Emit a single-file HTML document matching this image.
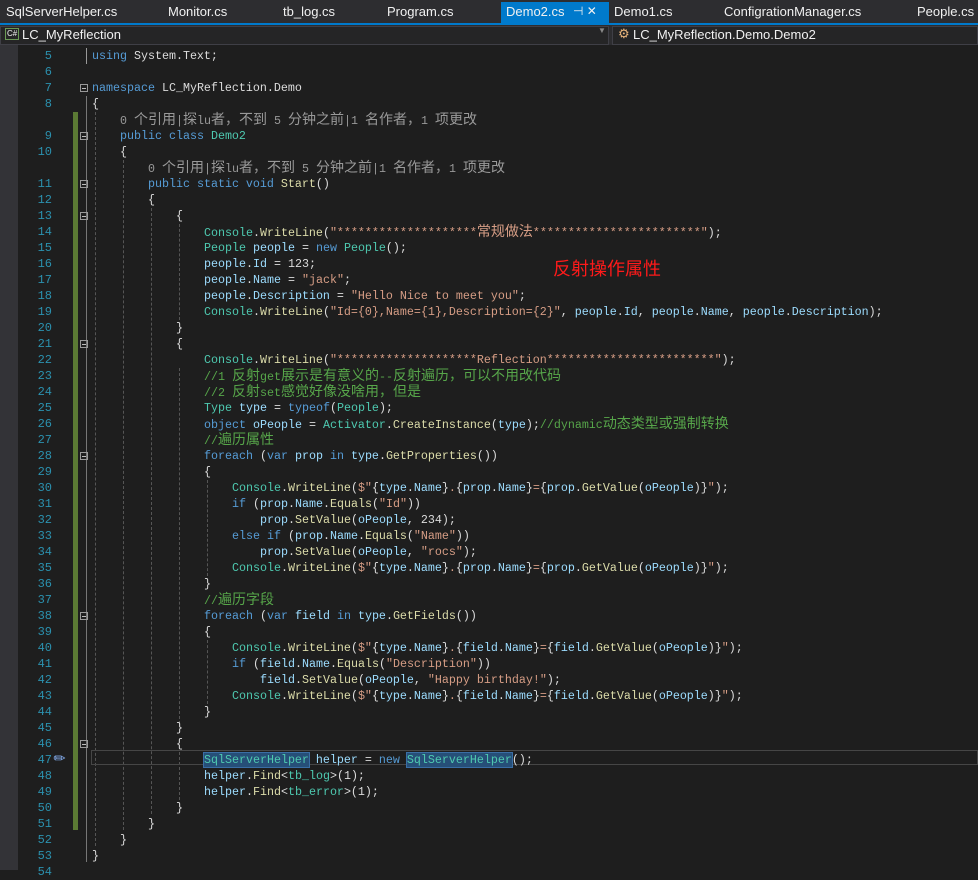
<!DOCTYPE html>
<html><head><meta charset="utf-8"><style>
body{margin:0;width:978px;height:870px;background:#1e1e1e;overflow:hidden;position:relative;font-family:"Liberation Sans","Noto Sans CJK SC",sans-serif}
.tabs{position:absolute;left:0;top:0;width:978px;height:23px;background:#2d2d30;color:#f1f1f1;font-size:13px}
.tab{position:absolute;top:4px}
.act{position:absolute;left:501px;top:2px;width:108px;height:21px;background:#007acc}
.blue{position:absolute;left:0;top:23px;width:978px;height:2px;background:#007acc}
.nav{position:absolute;left:0;top:25px;width:978px;height:20px;background:#2d2d30;color:#f1f1f1;font-size:13px}
.box{position:absolute;top:1px;height:17px;border:1px solid #3f3f46;background:#252526}
.marg{position:absolute;left:0;top:45px;width:18px;height:825px;background:#333337}
.code{position:absolute;left:0;top:0;font-family:"Liberation Mono","Noto Sans CJK SC",monospace;font-size:11.67px;white-space:pre}
.r{position:absolute;height:16px;line-height:16px}
.n{position:absolute;width:52px;text-align:right;color:#2b91af;font-family:"Liberation Mono",monospace;font-size:12px;height:16px;line-height:16px}
.c{font-size:14px;font-family:"Noto Sans CJK SC",sans-serif;line-height:14px}
.k{color:#569cd6}.t{color:#4ec9b0}.s{color:#d69d85}.g{color:#57a64a}.m{color:#dcdcaa}.v{color:#9cdcfe}.p{color:#dcdcdc}.l{color:#999}
.chg{position:absolute;left:73px;width:5px;background:#5b7a34}
.fold{position:absolute;left:80px;width:8px;height:8px;border:1px solid #999;box-sizing:border-box}
.fold:after{content:"";position:absolute;left:1px;top:3px;width:4px;height:1px;background:#bbb}
.gd{position:absolute;border-left:1px dashed #555;width:0}
</style></head><body>
<div class="tabs">
<div class="act"></div>
<span class="tab" style="left:6px">SqlServerHelper.cs</span>
<span class="tab" style="left:168px">Monitor.cs</span>
<span class="tab" style="left:283px">tb_log.cs</span>
<span class="tab" style="left:387px">Program.cs</span>
<span class="tab" style="left:506px">Demo2.cs</span>
<span class="tab" style="left:573px;font-size:12px">⊣ ✕</span>
<span class="tab" style="left:614px">Demo1.cs</span>
<span class="tab" style="left:724px">ConfigrationManager.cs</span>
<span class="tab" style="left:917px">People.cs</span>
</div>
<div class="blue"></div>
<div class="nav">
<div class="box" style="left:0;width:607px"></div>
<div class="box" style="left:612px;width:364px"></div>
<span style="position:absolute;left:5px;top:3px;border:1px solid #6a9955;font-size:8px;line-height:10px;padding:0 1px">C#</span>
<span style="position:absolute;left:22px;top:2px">LC_MyReflection</span>
<span style="position:absolute;left:598px;top:1px;font-size:8px;color:#888">▼</span>
<span style="position:absolute;left:618px;top:1px;color:#e8b47a">⚙</span>
<span style="position:absolute;left:633px;top:2px">LC_MyReflection.Demo.Demo2</span>
</div>
<div class="marg"></div>
<div class="chg" style="top:112px;height:718px"></div>
<div class="gd" style="left:95px;top:112px;height:734px"></div>
<div class="gd" style="left:123px;top:160px;height:670px"></div>
<div class="gd" style="left:151px;top:208px;height:606px"></div>
<div class="gd" style="left:179px;top:224px;height:96px"></div>
<div class="gd" style="left:179px;top:368px;height:356px"></div>
<div class="gd" style="left:179px;top:752px;height:48px"></div>
<div class="gd" style="left:207px;top:480px;height:96px"></div>
<div class="gd" style="left:207px;top:640px;height:64px"></div>
<div style="position:absolute;left:86px;top:48px;width:0;height:16px;border-left:1px solid #999"></div>
<div style="position:absolute;left:86px;top:96px;width:0;height:766px;border-left:1px solid #777"></div>
<div style="position:absolute;left:91px;top:750px;width:887px;height:15px;border:1px solid #464646;box-sizing:border-box"></div>
<div class="fold" style="top:84px"></div><div class="fold" style="top:132px"></div><div class="fold" style="top:180px"></div><div class="fold" style="top:212px"></div><div class="fold" style="top:340px"></div><div class="fold" style="top:452px"></div><div class="fold" style="top:612px"></div><div class="fold" style="top:740px"></div>
<div style="position:absolute;left:54px;top:750px;color:#8ab4f8;font-size:14px;transform:rotate(-45deg)">✎</div>
<div class="code" id="c">
<div class="n" style="top:48px">5</div><div class="r" style="top:48px;left:92px"><span class="k">using</span><span class="p"> System.Text;</span></div>
<div class="n" style="top:64px">6</div>
<div class="n" style="top:80px">7</div><div class="r" style="top:80px;left:92px"><span class="k">namespace</span><span class="p"> LC_MyReflection.Demo</span></div>
<div class="n" style="top:96px">8</div><div class="r p" style="top:96px;left:92px">{</div>
<div class="r l" style="top:112px;left:120px">0 <span class="c">个引用</span>|<span class="c">探</span>lu<span class="c">者，不到</span> 5 <span class="c">分钟之前</span>|1 <span class="c">名作者，</span>1 <span class="c">项更改</span></div>
<div class="n" style="top:128px">9</div><div class="r" style="top:128px;left:120px"><span class="k">public class</span><span class="t"> Demo2</span></div>
<div class="n" style="top:144px">10</div><div class="r p" style="top:144px;left:120px">{</div>
<div class="r l" style="top:160px;left:148px">0 <span class="c">个引用</span>|<span class="c">探</span>lu<span class="c">者，不到</span> 5 <span class="c">分钟之前</span>|1 <span class="c">名作者，</span>1 <span class="c">项更改</span></div>
<div class="n" style="top:176px">11</div><div class="r" style="top:176px;left:148px"><span class="k">public static void</span><span class="m"> Start</span><span class="p">()</span></div>
<div class="n" style="top:192px">12</div><div class="r p" style="top:192px;left:148px">{</div>
<div class="n" style="top:208px">13</div><div class="r p" style="top:208px;left:176px">{</div>
<div class="n" style="top:224px">14</div><div class="r" style="top:224px;left:204px"><span class="t">Console</span><span class="p">.</span><span class="m">WriteLine</span><span class="p">(</span><span class="s">"********************<span class="c">常规做法</span>************************"</span><span class="p">);</span></div>
<div class="n" style="top:240px">15</div><div class="r" style="top:240px;left:204px"><span class="t">People</span><span class="v"> people</span><span class="p"> = </span><span class="k">new</span><span class="t"> People</span><span class="p">();</span></div>
<div class="n" style="top:256px">16</div><div class="r" style="top:256px;left:204px"><span class="v">people</span><span class="p">.</span><span class="v">Id</span><span class="p"> = 123;</span></div>
<div class="n" style="top:272px">17</div><div class="r" style="top:272px;left:204px"><span class="v">people</span><span class="p">.</span><span class="v">Name</span><span class="p"> = </span><span class="s">"jack"</span><span class="p">;</span></div>
<div class="n" style="top:288px">18</div><div class="r" style="top:288px;left:204px"><span class="v">people</span><span class="p">.</span><span class="v">Description</span><span class="p"> = </span><span class="s">"Hello Nice to meet you"</span><span class="p">;</span></div>
<div class="n" style="top:304px">19</div><div class="r" style="top:304px;left:204px"><span class="t">Console</span><span class="p">.</span><span class="m">WriteLine</span><span class="p">(</span><span class="s">"Id={0},Name={1},Description={2}"</span><span class="p">, </span><span class="v">people</span><span class="p">.</span><span class="v">Id</span><span class="p">, </span><span class="v">people</span><span class="p">.</span><span class="v">Name</span><span class="p">, </span><span class="v">people</span><span class="p">.</span><span class="v">Description</span><span class="p">);</span></div>
<div class="n" style="top:320px">20</div><div class="r p" style="top:320px;left:176px">}</div>
<div class="n" style="top:336px">21</div><div class="r p" style="top:336px;left:176px">{</div>
<div class="n" style="top:352px">22</div><div class="r" style="top:352px;left:204px"><span class="t">Console</span><span class="p">.</span><span class="m">WriteLine</span><span class="p">(</span><span class="s">"********************Reflection************************"</span><span class="p">);</span></div>
<div class="n" style="top:368px">23</div><div class="r g" style="top:368px;left:204px">//1 <span class="c">反射</span>get<span class="c">展示是有意义的</span>--<span class="c">反射遍历，可以不用改代码</span></div>
<div class="n" style="top:384px">24</div><div class="r g" style="top:384px;left:204px">//2 <span class="c">反射</span>set<span class="c">感觉好像没啥用，但是</span></div>
<div class="n" style="top:400px">25</div><div class="r" style="top:400px;left:204px"><span class="t">Type</span><span class="v"> type</span><span class="p"> = </span><span class="k">typeof</span><span class="p">(</span><span class="t">People</span><span class="p">);</span></div>
<div class="n" style="top:416px">26</div><div class="r" style="top:416px;left:204px"><span class="k">object</span><span class="v"> oPeople</span><span class="p"> = </span><span class="t">Activator</span><span class="p">.</span><span class="m">CreateInstance</span><span class="p">(</span><span class="v">type</span><span class="p">);</span><span class="g">//dynamic<span class="c">动态类型或强制转换</span></span></div>
<div class="n" style="top:432px">27</div><div class="r g" style="top:432px;left:204px">//<span class="c">遍历属性</span></div>
<div class="n" style="top:448px">28</div><div class="r" style="top:448px;left:204px"><span class="k">foreach</span><span class="p"> (</span><span class="k">var</span><span class="v"> prop</span><span class="k"> in</span><span class="v"> type</span><span class="p">.</span><span class="m">GetProperties</span><span class="p">())</span></div>
<div class="n" style="top:464px">29</div><div class="r p" style="top:464px;left:204px">{</div>
<div class="n" style="top:480px">30</div><div class="r" style="top:480px;left:232px"><span class="t">Console</span><span class="p">.</span><span class="m">WriteLine</span><span class="p">(</span><span class="s">$"</span><span class="p">{</span><span class="v">type</span><span class="p">.</span><span class="v">Name</span><span class="p">}</span><span class="s">.</span><span class="p">{</span><span class="v">prop</span><span class="p">.</span><span class="v">Name</span><span class="p">}</span><span class="s">=</span><span class="p">{</span><span class="v">prop</span><span class="p">.</span><span class="m">GetValue</span><span class="p">(</span><span class="v">oPeople</span><span class="p">)}</span><span class="s">"</span><span class="p">);</span></div>
<div class="n" style="top:496px">31</div><div class="r" style="top:496px;left:232px"><span class="k">if</span><span class="p"> (</span><span class="v">prop</span><span class="p">.</span><span class="v">Name</span><span class="p">.</span><span class="m">Equals</span><span class="p">(</span><span class="s">"Id"</span><span class="p">))</span></div>
<div class="n" style="top:512px">32</div><div class="r" style="top:512px;left:260px"><span class="v">prop</span><span class="p">.</span><span class="m">SetValue</span><span class="p">(</span><span class="v">oPeople</span><span class="p">, 234);</span></div>
<div class="n" style="top:528px">33</div><div class="r" style="top:528px;left:232px"><span class="k">else if</span><span class="p"> (</span><span class="v">prop</span><span class="p">.</span><span class="v">Name</span><span class="p">.</span><span class="m">Equals</span><span class="p">(</span><span class="s">"Name"</span><span class="p">))</span></div>
<div class="n" style="top:544px">34</div><div class="r" style="top:544px;left:260px"><span class="v">prop</span><span class="p">.</span><span class="m">SetValue</span><span class="p">(</span><span class="v">oPeople</span><span class="p">, </span><span class="s">"rocs"</span><span class="p">);</span></div>
<div class="n" style="top:560px">35</div><div class="r" style="top:560px;left:232px"><span class="t">Console</span><span class="p">.</span><span class="m">WriteLine</span><span class="p">(</span><span class="s">$"</span><span class="p">{</span><span class="v">type</span><span class="p">.</span><span class="v">Name</span><span class="p">}</span><span class="s">.</span><span class="p">{</span><span class="v">prop</span><span class="p">.</span><span class="v">Name</span><span class="p">}</span><span class="s">=</span><span class="p">{</span><span class="v">prop</span><span class="p">.</span><span class="m">GetValue</span><span class="p">(</span><span class="v">oPeople</span><span class="p">)}</span><span class="s">"</span><span class="p">);</span></div>
<div class="n" style="top:576px">36</div><div class="r p" style="top:576px;left:204px">}</div>
<div class="n" style="top:592px">37</div><div class="r g" style="top:592px;left:204px">//<span class="c">遍历字段</span></div>
<div class="n" style="top:608px">38</div><div class="r" style="top:608px;left:204px"><span class="k">foreach</span><span class="p"> (</span><span class="k">var</span><span class="v"> field</span><span class="k"> in</span><span class="v"> type</span><span class="p">.</span><span class="m">GetFields</span><span class="p">())</span></div>
<div class="n" style="top:624px">39</div><div class="r p" style="top:624px;left:204px">{</div>
<div class="n" style="top:640px">40</div><div class="r" style="top:640px;left:232px"><span class="t">Console</span><span class="p">.</span><span class="m">WriteLine</span><span class="p">(</span><span class="s">$"</span><span class="p">{</span><span class="v">type</span><span class="p">.</span><span class="v">Name</span><span class="p">}</span><span class="s">.</span><span class="p">{</span><span class="v">field</span><span class="p">.</span><span class="v">Name</span><span class="p">}</span><span class="s">=</span><span class="p">{</span><span class="v">field</span><span class="p">.</span><span class="m">GetValue</span><span class="p">(</span><span class="v">oPeople</span><span class="p">)}</span><span class="s">"</span><span class="p">);</span></div>
<div class="n" style="top:656px">41</div><div class="r" style="top:656px;left:232px"><span class="k">if</span><span class="p"> (</span><span class="v">field</span><span class="p">.</span><span class="v">Name</span><span class="p">.</span><span class="m">Equals</span><span class="p">(</span><span class="s">"Description"</span><span class="p">))</span></div>
<div class="n" style="top:672px">42</div><div class="r" style="top:672px;left:260px"><span class="v">field</span><span class="p">.</span><span class="m">SetValue</span><span class="p">(</span><span class="v">oPeople</span><span class="p">, </span><span class="s">"Happy birthday!"</span><span class="p">);</span></div>
<div class="n" style="top:688px">43</div><div class="r" style="top:688px;left:232px"><span class="t">Console</span><span class="p">.</span><span class="m">WriteLine</span><span class="p">(</span><span class="s">$"</span><span class="p">{</span><span class="v">type</span><span class="p">.</span><span class="v">Name</span><span class="p">}</span><span class="s">.</span><span class="p">{</span><span class="v">field</span><span class="p">.</span><span class="v">Name</span><span class="p">}</span><span class="s">=</span><span class="p">{</span><span class="v">field</span><span class="p">.</span><span class="m">GetValue</span><span class="p">(</span><span class="v">oPeople</span><span class="p">)}</span><span class="s">"</span><span class="p">);</span></div>
<div class="n" style="top:704px">44</div><div class="r p" style="top:704px;left:204px">}</div>
<div class="n" style="top:720px">45</div><div class="r p" style="top:720px;left:176px">}</div>
<div class="n" style="top:736px">46</div><div class="r p" style="top:736px;left:176px">{</div>
<div class="n" style="top:752px">47</div><div class="r" style="top:752px;left:204px"><span class="t" style="background:#264f78;outline:1px solid #3a6ea5">SqlServerHelper</span><span class="v"> helper</span><span class="p"> = </span><span class="k">new</span> <span class="t" style="background:#264f78;outline:1px solid #3a6ea5">SqlServerHelper</span><span class="p">();</span></div>
<div class="n" style="top:768px">48</div><div class="r" style="top:768px;left:204px"><span class="v">helper</span><span class="p">.</span><span class="m">Find</span><span class="p">&lt;</span><span class="t">tb_log</span><span class="p">&gt;(1);</span></div>
<div class="n" style="top:784px">49</div><div class="r" style="top:784px;left:204px"><span class="v">helper</span><span class="p">.</span><span class="m">Find</span><span class="p">&lt;</span><span class="t">tb_error</span><span class="p">&gt;(1);</span></div>
<div class="n" style="top:800px">50</div><div class="r p" style="top:800px;left:176px">}</div>
<div class="n" style="top:816px">51</div><div class="r p" style="top:816px;left:148px">}</div>
<div class="n" style="top:832px">52</div><div class="r p" style="top:832px;left:120px">}</div>
<div class="n" style="top:848px">53</div><div class="r p" style="top:848px;left:92px">}</div>
<div class="n" style="top:864px">54</div>
</div>
<div style="position:absolute;left:553px;top:255px;color:#ff1a1a;font-size:18px;font-family:'Noto Sans CJK SC',sans-serif">反射操作属性</div>
</body></html>
